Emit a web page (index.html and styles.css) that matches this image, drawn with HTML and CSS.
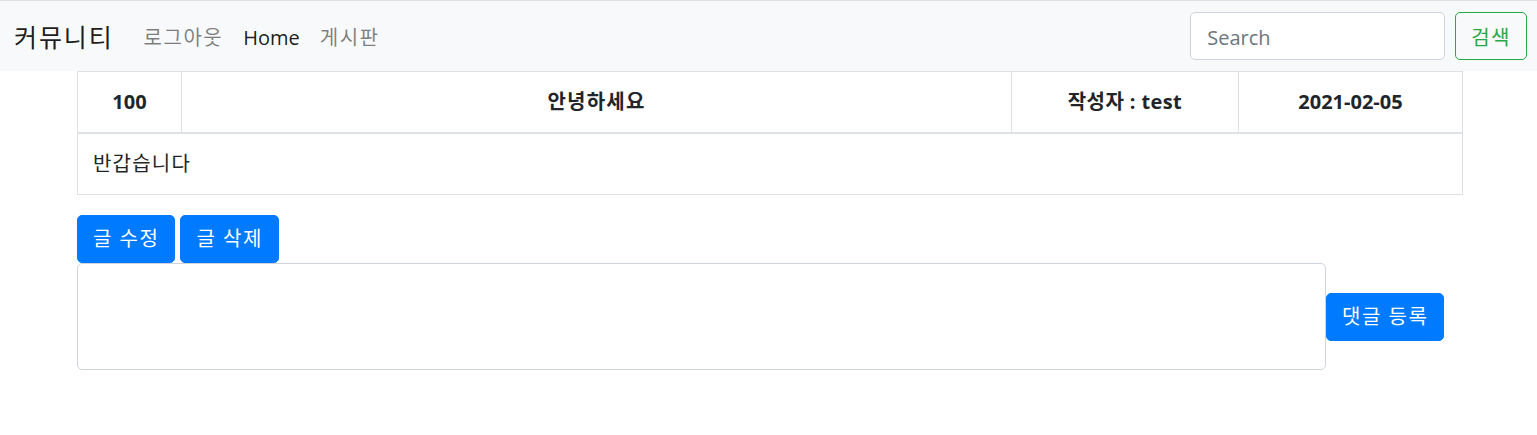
FILE: index.html
```html
<!DOCTYPE html>
<html lang="ko">
<head>
<meta charset="utf-8">
<title>커뮤니티</title>
<link rel="stylesheet" href="styles.css">
</head>
<body>
<nav class="navbar">
  <a class="brand" href="#">커뮤니티</a>
  <ul class="nav">
    <li><a class="nav-link" href="#">로그아웃</a></li>
    <li><a class="nav-link active" href="#">Home</a></li>
    <li><a class="nav-link" href="#">게시판</a></li>
  </ul>
  <form class="search">
    <input class="search-input" type="search" placeholder="Search">
    <button class="btn-outline" type="button">검색</button>
  </form>
</nav>
<main class="container">
  <table class="post">
    <thead>
      <tr>
        <th class="col-no">100</th>
        <th class="col-title">안녕하세요</th>
        <th class="col-author">작성자 : test</th>
        <th class="col-date">2021-02-05</th>
      </tr>
    </thead>
    <tbody>
      <tr>
        <td colspan="4">반갑습니다</td>
      </tr>
    </tbody>
  </table>
  <div class="actions">
    <button class="btn" type="button">글 수정</button>
    <button class="btn" type="button">글 삭제</button>
  </div>
  <div class="comment">
    <textarea class="comment-input"></textarea>
    <button class="btn" type="button">댓글 등록</button>
  </div>
</main>
</body>
</html>
```

FILE: styles.css
```css
* { box-sizing: border-box; }

body {
  margin: 0;
  font-family: "Open Sans", "Noto Sans CJK KR", sans-serif;
  font-size: 20px;
  line-height: 1.5;
  color: #212529;
  background: #fff;
}

.navbar {
  display: flex;
  align-items: center;
  height: 71px;
  padding: 0 10px 0 14px;
  background: #f8f9fa;
  border-top: 1px solid #dee2e6;
}

.brand {
  font-size: 25px;
  letter-spacing: 1.9px;
  color: rgba(0, 0, 0, 0.9);
  text-decoration: none;
  margin: 3px 20px 0 0;
  line-height: 37px;
}

.nav {
  display: flex;
  list-style: none;
  margin: 3px 0 0;
  padding: 0;
  flex: 1;
}

.nav-link {
  display: block;
  padding: 0 10px;
  letter-spacing: 1.5px;
  color: rgba(0, 0, 0, 0.5);
  text-decoration: none;
}

.nav-link.active {
  letter-spacing: 0;
  color: rgba(0, 0, 0, 0.9);
}

.search {
  display: flex;
  align-items: center;
  margin: 0;
}

.search-input {
  width: 255px;
  height: 48px;
  padding: 3px 16px 0;
  font: inherit;
  color: #495057;
  background: #fff;
  border: 1px solid #ced4da;
  border-radius: 5px;
  margin-right: 10px;
}

.search-input::placeholder {
  color: #6c757d;
}

.btn-outline {
  height: 48px;
  padding: 3px 15px 0;
  font: inherit;
  letter-spacing: 1.5px;
  color: #28a745;
  background: transparent;
  border: 1px solid #28a745;
  border-radius: 5px;
}

.container {
  margin-left: 77px;
  width: 1386px;
}

.post {
  width: 100%;
  border-collapse: collapse;
}

.post th,
.post td {
  border: 1px solid #dee2e6;
  padding: 15px 15px;
  line-height: 30px;
  letter-spacing: 1.2px;
}

.post th {
  font-weight: 700;
  text-align: center;
}

.post thead th {
  border-bottom: 2px solid #dee2e6;
}

.post td {
  text-align: left;
}

.post .col-no,
.post .col-date {
  letter-spacing: 0;
}

.post .col-author {
  letter-spacing: 0.4px;
}

.col-no { width: 104px; }
.col-author { width: 227px; }
.col-date { width: 224px; }

.actions {
  display: flex;
  gap: 5px;
  margin-top: 20px;
}

.btn {
  height: 48px;
  padding: 0 15px;
  font: inherit;
  letter-spacing: 1.5px;
  color: #fff;
  background: #007bff;
  border: 1px solid #007bff;
  border-radius: 5px;
}

.comment {
  display: flex;
  align-items: center;
}

.comment-input {
  width: 1249px;
  height: 107px;
  border: 1px solid #ced4da;
  border-radius: 5px;
  resize: none;
  font: inherit;
}
```
